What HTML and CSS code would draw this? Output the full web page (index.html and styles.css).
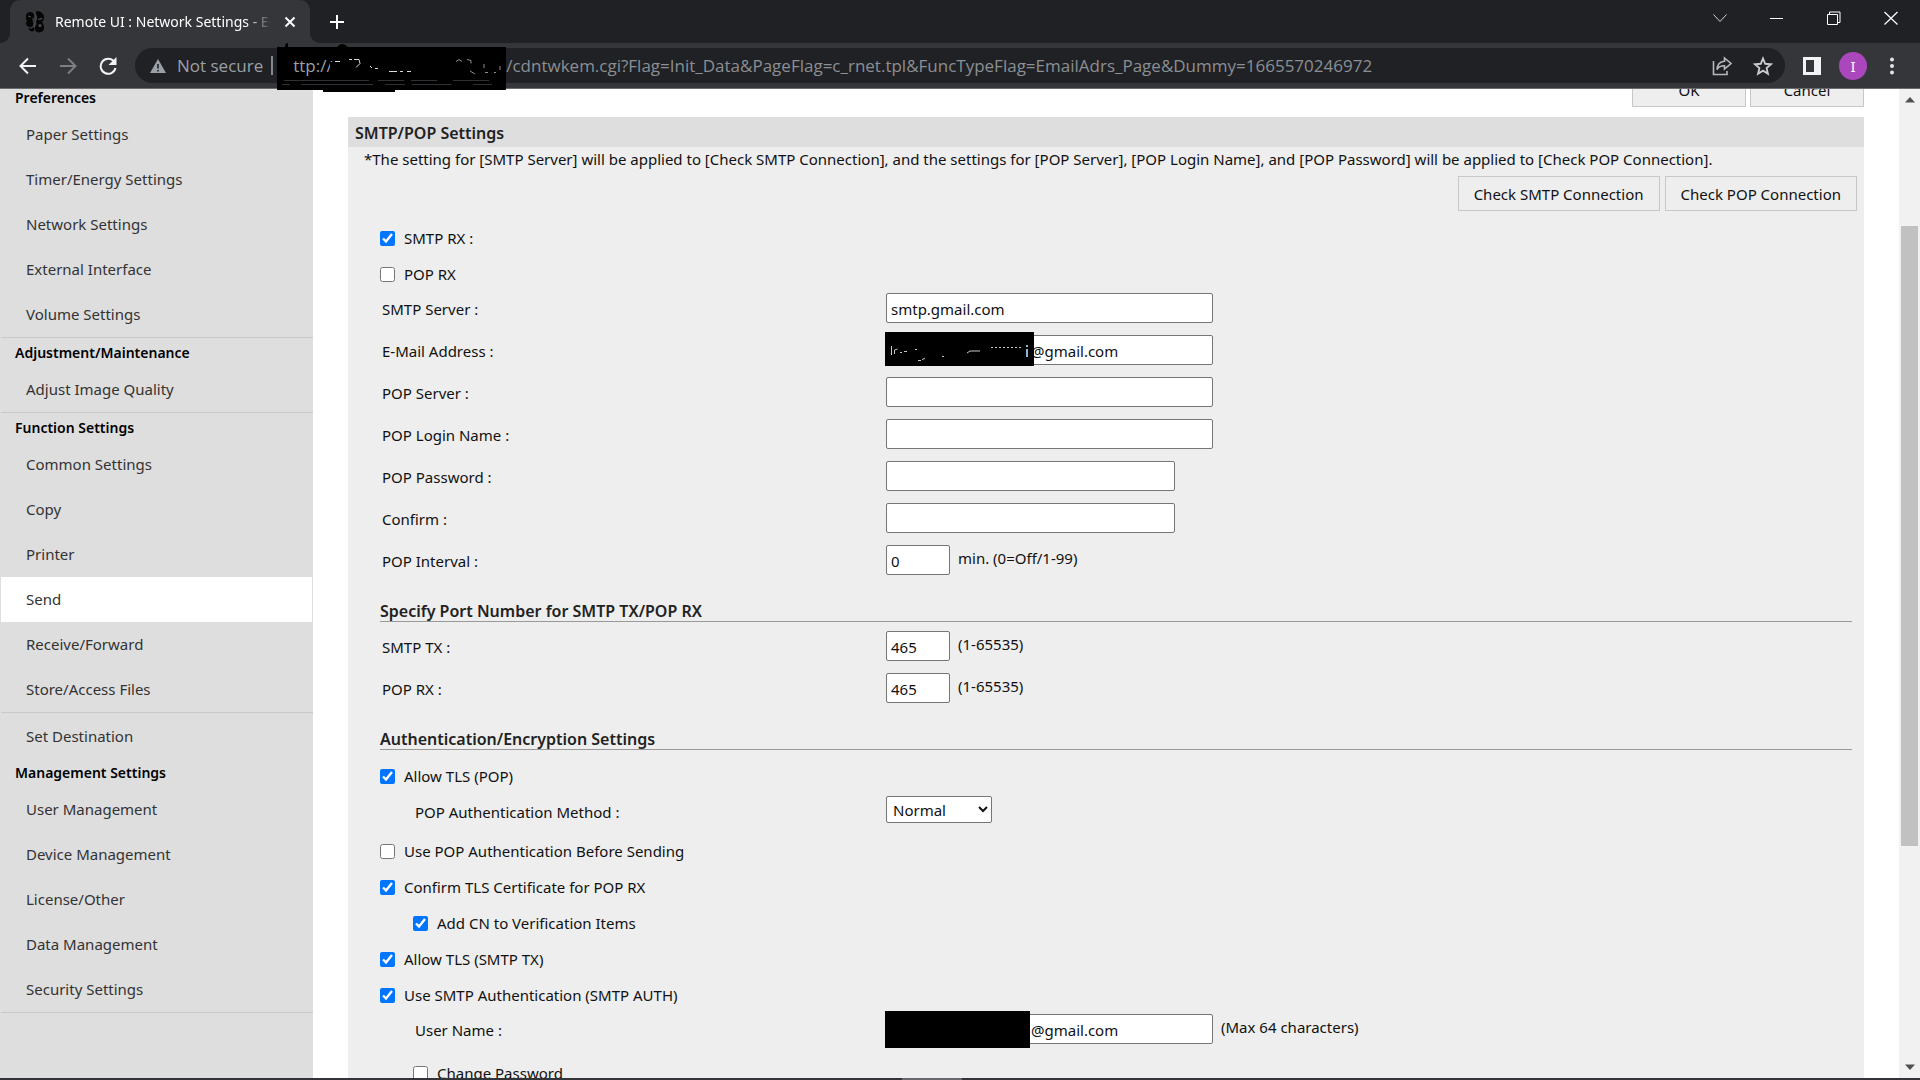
FILE: index.html
```html
<!DOCTYPE html>
<html lang="en">
<head>
<meta charset="utf-8">
<title>Remote UI : Network Settings - E-Mail</title>
<link rel="stylesheet" href="styles.css">
</head>
<body>
<header class="browser">
  <div class="tabstrip">
    <div class="tab">
      <svg class="favicon" width="20" height="22" viewBox="0 0 20 22"><path fill="#060606" d="M1 4C2 1 6 0 8 2c2 2 1 5-1 6l1 3c1 3-1 6-4 5C1 15 0 12 2 10L1 8zM10 1c4-2 9 1 9 5 0 3-1 4-2 5 2 3 3 6 1 9-2 2-7 2-8-1-1-2 0-4 2-6-2-3-1-5 0-7z"/><path fill="#060606" d="M3 17c2 1 4 1 6-1v4c-2 1-5 0-6-3z"/><path fill="none" stroke="#4a4b4f" stroke-width="1.2" d="M10 1c-1 3 3 4 1 8-1 3-3 4-1 7M3 5l3 1M13 8c2 1 3 0 4-1"/><circle cx="15" cy="14.500" r="1.600" fill="#4a4b4f"/></svg>
      <span class="tab-title">Remote UI : Network Settings - E-Mail</span>
      <button class="icon-btn" type="button" aria-label="Close tab"><svg width="12" height="12" viewBox="0 0 12 12"><path d="M1.500 1.500l9 9M10.500 1.500l-9 9" stroke="#fff" stroke-width="2"/></svg></button>
    </div>
    <button class="icon-btn new-tab" type="button" aria-label="New tab"><svg width="16" height="16" viewBox="0 0 16 16"><path d="M8 1v14M1 8h14" stroke="#fff" stroke-width="2"/></svg></button>
    <div class="window-controls">
      <button class="icon-btn" type="button" aria-label="Search tabs"><svg width="14" height="14" viewBox="0 0 14 14"><path d="M.5 3.500L7 10.500l6.500-7" fill="none" stroke="#d0d0d0"/></svg></button>
      <button class="icon-btn" type="button" aria-label="Minimize"><svg width="14" height="14" viewBox="0 0 14 14"><path d="M0 7.500h13" stroke="#fff"/></svg></button>
      <button class="icon-btn" type="button" aria-label="Restore"><svg width="14" height="14" viewBox="0 0 14 14"><path d="M.5 3.500h10v10H.5zM2.500 3V1h10.500v10.500h-2" fill="none" stroke="#fff"/></svg></button>
      <button class="icon-btn" type="button" aria-label="Close"><svg width="14" height="14" viewBox="0 0 14 14"><path d="M.5 1l13 12.500M13.500 1l-13 12.500" stroke="#fff" stroke-width="1.200"/></svg></button>
    </div>
  </div>
  <div class="toolbar">
    <div class="nav-buttons">
      <button class="icon-btn" type="button" aria-label="Back"><svg width="18" height="18" viewBox="0 0 18 18"><path d="M17 9H2M9 1.500L1.500 9 9 16.500" fill="none" stroke="#f1f3f4" stroke-width="2"/></svg></button>
      <button class="icon-btn" type="button" aria-label="Forward"><svg width="18" height="18" viewBox="0 0 18 18"><path d="M1 9h15M9 1.500L16.500 9 9 16.500" fill="none" stroke="#7d7e81" stroke-width="2"/></svg></button>
      <button class="icon-btn" type="button" aria-label="Reload"><svg width="18" height="18" viewBox="0 0 18 18"><path d="M15 4.500A7.500 7.500 0 1 0 16.500 11" fill="none" stroke="#f1f3f4" stroke-width="2"/><path d="M17.500 0v8h-8z" fill="#f1f3f4"/></svg></button>
    </div>
    <div class="omnibox">
      <svg class="warn" width="16" height="16" viewBox="0 0 16 16"><path fill="#9aa0a6" d="M8 1l8 14H0z"/><path stroke="#202124" stroke-width="1.600" d="M8 6v4.500M8 12v1.500"/></svg>
      <span class="secure">Not secure</span>
      <span class="divider"></span>
      <span class="redacted-host"><span>ttp://</span>
        <svg width="229" height="48" viewBox="0 0 229 48"><path fill="#000" d="M8 0q0-4 3-4v4zM60 0q5-6 11 0zM46 42h72v3H46zM52 8h14v6H52zM53 15h14v8H53z"/><path fill="none" stroke="#dcdcdc" d="M58 14.500h5M72 12.500h3M77 12.500h5l1 4-4 4M93 19l2 2M98 21.500h3M112 24.500h8M123 24.500h3M130 24.500h4"/><path fill="none" stroke="#8b8f94" d="M179 14.500l3-2 3 2M190 12.500l4 1v3M193 24l5 3M207 17v4M208 25.500h3M217 25.500h2M223 19v4"/><path fill="none" stroke="#303135" d="M7 33.500h85M101 33.500h26M134 33.500h26M176 33.500h36M5 37.500h8M24 37.500h72M108 37.500h20M135 37.500h40M196 37.500h19"/></svg>
      </span>
      <input class="url" type="text" aria-label="Address" value="/cdntwkem.cgi?Flag=Init_Data&amp;PageFlag=c_rnet.tpl&amp;FuncTypeFlag=EmailAdrs_Page&amp;Dummy=1665570246972">
      <button class="icon-btn" type="button" aria-label="Share"><svg width="20" height="20" viewBox="0 0 20 20"><path d="M1.500 5v13.500h13.500V15" fill="none" stroke="#b5b8bc" stroke-width="1.600"/><path d="M12.500 2l6.500 5.500-6.500 5.500v-3.200c-4 0-6 1.200-7.500 3.700.3-4.500 3-8 7.500-8.300z" fill="none" stroke="#b5b8bc" stroke-width="1.600"/></svg></button>
      <button class="icon-btn" type="button" aria-label="Bookmark"><svg width="20" height="20" viewBox="0 0 20 20"><path d="M10 2.500l2.200 5.300 5.800.5-4.400 3.800 1.300 5.600-4.900-3-4.900 3 1.300-5.600L2 8.300l5.800-.5z" fill="none" stroke="#c9cbce" stroke-width="1.900"/></svg></button>
    </div>
    <div class="toolbar-end">
      <button class="icon-btn" type="button" aria-label="Side panel"><svg width="18" height="18" viewBox="0 0 18 18"><path fill="#f1f3f4" fill-rule="evenodd" d="M0 0h18v18H0zM3 3v12h8V3z"/></svg></button>
      <button class="avatar" type="button">I</button>
      <button class="icon-btn" type="button" aria-label="Menu"><svg width="6" height="18" viewBox="0 0 6 18"><g fill="#e3e4e6"><circle cx="3" cy="2.500" r="2"/><circle cx="3" cy="9" r="2"/><circle cx="3" cy="15.500" r="2"/></g></svg></button>
    </div>
  </div>
</header>

<div class="page">
  <nav class="sidebar">
    <section class="menu-group first">
      <h2>Preferences</h2>
      <a href="#">Paper Settings</a>
      <a href="#">Timer/Energy Settings</a>
      <a href="#">Network Settings</a>
      <a href="#">External Interface</a>
      <a href="#">Volume Settings</a>
    </section>
    <section class="menu-group">
      <h2>Adjustment/Maintenance</h2>
      <a href="#">Adjust Image Quality</a>
    </section>
    <section class="menu-group">
      <h2>Function Settings</h2>
      <a href="#">Common Settings</a>
      <a href="#">Copy</a>
      <a href="#">Printer</a>
      <a href="#" class="current">Send</a>
      <a href="#">Receive/Forward</a>
      <a href="#">Store/Access Files</a>
    </section>
    <section class="menu-group">
      <a href="#" class="standalone">Set Destination</a>
      <h2>Management Settings</h2>
      <a href="#">User Management</a>
      <a href="#">Device Management</a>
      <a href="#">License/Other</a>
      <a href="#">Data Management</a>
      <a href="#">Security Settings</a>
    </section>
  </nav>

  <main class="content">
    <div class="actions">
      <button class="btn wide" type="button">OK</button>
      <button class="btn wide" type="button">Cancel</button>
    </div>
    <form class="panel">
      <h1>SMTP/POP Settings</h1>
      <p class="note">*The setting for [SMTP Server] will be applied to [Check SMTP Connection], and the settings for [POP Server], [POP Login Name], and [POP Password] will be applied to [Check POP Connection].</p>
      <div class="checks-bar">
        <button class="btn" type="button">Check SMTP Connection</button>
        <button class="btn" type="button">Check POP Connection</button>
      </div>
      <div class="fields">
        <label class="check"><input type="checkbox" checked>SMTP RX :</label>
        <label class="check"><input type="checkbox">POP RX</label>
        <div class="field"><label for="server">SMTP Server :</label><input id="server" type="text" class="long" value="smtp.gmail.com"></div>
        <div class="field"><label for="mail">E-Mail Address :</label><span class="masked"><input id="mail" type="text" class="long" value="@gmail.com"><svg class="mask" width="149" height="34" viewBox="0 0 149 34"><path fill="#000" d="M0 0h149v34H0z"/><path fill="none" stroke="#c8c8c8" d="M6.500 14v9M9.500 22v-4l3-1M15 20.500h2M19 19.500h3M30 17.500h2M33 28.500h3M37 27.500l3-1M57 24.500h2M82 21l3-2h10"/><path fill="none" stroke="#c8c8c8" stroke-dasharray="2 2" d="M106 15.500h30"/><path stroke="#8fb8d8" stroke-width="2" d="M142 13v2M142 17v8"/></svg></span></div>
        <div class="field"><label for="pop">POP Server :</label><input id="pop" type="text" class="long"></div>
        <div class="field"><label for="login">POP Login Name :</label><input id="login" type="text" class="long"></div>
        <div class="field"><label for="pass">POP Password :</label><input id="pass" type="password" class="medium"></div>
        <div class="field"><label for="confirm">Confirm :</label><input id="confirm" type="password" class="medium"></div>
        <div class="field"><label for="interval">POP Interval :</label><input id="interval" type="text" class="short" value="0"><span class="hint">min. (0=Off/1-99)</span></div>

        <h3>Specify Port Number for SMTP TX/POP RX</h3>
        <div class="field"><label for="tx">SMTP TX :</label><input id="tx" type="text" class="short" value="465"><span class="hint">(1-65535)</span></div>
        <div class="field"><label for="rx">POP RX :</label><input id="rx" type="text" class="short" value="465"><span class="hint">(1-65535)</span></div>

        <h3>Authentication/Encryption Settings</h3>
        <label class="check"><input type="checkbox" checked>Allow TLS (POP)</label>
        <div class="field nested choice"><label for="method">POP Authentication Method :</label><select id="method"><option>Normal</option></select></div>
        <label class="check"><input type="checkbox">Use POP Authentication Before Sending</label>
        <label class="check"><input type="checkbox" checked>Confirm TLS Certificate for POP RX</label>
        <label class="check nested"><input type="checkbox" checked>Add CN to Verification Items</label>
        <label class="check"><input type="checkbox" checked>Allow TLS (SMTP TX)</label>
        <label class="check"><input type="checkbox" checked>Use SMTP Authentication (SMTP AUTH)</label>
        <div class="field nested"><label for="user">User Name :</label><span class="masked"><input id="user" type="text" class="long" value="@gmail.com"><svg class="mask" width="145" height="37" viewBox="0 0 145 37"><path fill="#000" d="M0 0h145v37H0z"/></svg></span><span class="hint">(Max 64 characters)</span></div>
        <label class="check nested"><input type="checkbox">Change Password</label>
      </div>
    </form>
  </main>

  <div class="scrollbar">
    <svg width="10" height="6" viewBox="0 0 10 6"><path fill="#505050" d="M0 5.500h10L5 0z"/></svg>
    <div class="track"><div class="thumb"></div></div>
    <svg width="10" height="6" viewBox="0 0 10 6"><path fill="#505050" d="M0 .5h10L5 6z"/></svg>
  </div>
</div>
<div class="taskbar"><span></span></div>
</body>
</html>
```
FILE: styles.css
```css
* { box-sizing: border-box; }
body {
  margin: 0;
  height: 100vh;
  overflow: hidden;
  display: flex;
  flex-direction: column;
  font: 15px/20px "Noto Sans", "Open Sans", sans-serif;
  color: #111;
}
button, input, select { font: inherit; color: inherit; }
svg { display: block; flex: none; }

/* browser chrome */
.browser { flex: none; position: relative; z-index: 1; background: #35363a; border-bottom: 1px solid #6a6b6e; }
.icon-btn { display: flex; align-items: center; justify-content: center; padding: 0; border: 0; background: none; flex: none; }
.tabstrip { display: flex; align-items: center; height: 43px; padding-left: 10px; background: #202124; }
.tab {
  position: relative;
  display: flex; align-items: center;
  width: 300px; height: 43px;
  padding: 0 14px 0 15px;
  border-radius: 10px 10px 0 0;
  background: #35363a;
}
.tab::before, .tab::after { content: ""; position: absolute; bottom: 0; width: 10px; height: 10px; }
.tab::before { left: -10px; background: radial-gradient(circle at 0 0, #202124 10px, #35363a 10px); }
.tab::after { right: -10px; background: radial-gradient(circle at 100% 0, #202124 10px, #35363a 10px); }
.tab-title {
  flex: 1; margin: 0 12px 0 10px;
  font-size: 14px; color: #fff; white-space: nowrap; overflow: hidden;
  -webkit-mask-image: linear-gradient(to right, #000 88%, transparent);
  mask-image: linear-gradient(to right, #000 88%, transparent);
}
.new-tab { margin-left: 19px; }
.window-controls { display: flex; margin-left: auto; align-self: flex-start; height: 36px; padding-right: 1px; }
.window-controls .icon-btn { width: 57px; }
.toolbar { display: flex; align-items: center; height: 45px; }
.nav-buttons { display: flex; gap: 22px; padding: 0 18px 0 19px; }
.omnibox {
  flex: 1; min-width: 0;
  display: flex; align-items: center;
  height: 35px; padding: 0 12px 0 15px;
  border-radius: 18px;
  background: #202124; color: #9aa0a6;
  font: 17px/24px "Open Sans", "Noto Sans", sans-serif;
}
.secure { margin-left: 11px; white-space: nowrap; }
.divider { width: 2px; height: 19px; margin: 0 4px 0 8px; background: #85888c; }
.redacted-host {
  position: relative; flex: none; align-self: flex-start;
  width: 229px; height: 43px; margin-top: -1px; padding: 7px 0 0 16px;
  background: #000;
}
.redacted-host svg { position: absolute; left: 0; top: 0; overflow: visible; }
.url { flex: 1; min-width: 0; padding: 0; border: 0; background: none; color: #8b8f94; }
.omnibox .icon-btn + .icon-btn { margin-left: 21px; }
.toolbar-end { display: flex; align-items: center; gap: 18px; padding: 0 25px 0 18px; }
.toolbar-end .icon-btn:last-child { margin-left: 4px; }
.avatar { width: 28px; height: 28px; padding: 0; border: 0; border-radius: 50%; background: #ab47bc; color: #fff; }

/* page */
.page { flex: 1; min-height: 0; display: flex; background: #fff; overflow: hidden; }
.sidebar { flex: none; width: 313px; padding-left: 1px; background: #dedede; }
.menu-group { border-bottom: 1px solid #c8c8c8; }
.menu-group h2 { margin: 0; padding-left: 14px; font-size: 14px; font-weight: 600; line-height: 29px; color: #000; }
.menu-group.first h2 { line-height: 18px; padding-bottom: 5px; }
.menu-group a { display: block; margin-right: 1px; padding-left: 25px; line-height: 45px; color: #333; text-decoration: none; }
.menu-group a.current { background: #fff; }
.menu-group a.standalone { padding-top: 1px; line-height: 44px; }
.content { flex: 1; min-width: 0; padding: 0 35px; }
.actions { display: flex; justify-content: flex-end; align-items: flex-end; gap: 4px; height: 18px; overflow: hidden; }
.btn { flex: none; height: 35px; padding: 0 15px; border: 1px solid #c8c8c8; background: #eee; color: #111; white-space: nowrap; }
.btn.wide { width: 114px; }
.panel { margin-top: 10px; min-height: 100%; background: #eee; }
.panel h1 { margin: 0; padding: 3px 0 0 7px; font-size: 16px; line-height: 27px; font-weight: 600; color: #222; background: #dedede; }
.note { margin: 0; padding: 2px 0 7px 16px; white-space: nowrap; }
.checks-bar { display: flex; justify-content: flex-end; gap: 5px; padding-right: 7px; }
.fields { padding: 10px 12px 0 32px; }
.fields h3 { margin: 12px 0 9px; padding-top: 3px; font-size: 16px; line-height: 19px; font-weight: 600; color: #222; border-bottom: 1px solid #999; }
.check { display: flex; align-items: center; height: 36px; padding-bottom: 2px; }
.check input { width: 15px; height: 15px; margin: 0 9px 0 0; accent-color: #0075ff; }
.check.nested { padding-left: 33px; }
.field { display: flex; align-items: flex-start; height: 42px; line-height: 32px; }
.field > label { width: 506px; padding-left: 2px; flex: none; }
.field.nested > label { padding-left: 35px; }
.field.choice { height: 39px; padding-top: 1px; }
.field input { height: 30px; padding: 2px 4px 0; border: 1px solid #767676; border-radius: 2px; background: #fff; }
.field .long { width: 327px; }
.field .medium { width: 289px; }
.field .short { width: 64px; }
.field select { width: 106px; height: 27px; padding: 0 0 0 2px; border: 1px solid #767676; border-radius: 2px; background: #fff; }
.hint { margin-left: 8px; line-height: 26px; }
.masked { position: relative; display: flex; }
.masked input { padding-left: 144px; }
.mask { position: absolute; left: -1px; top: -3px; }

.scrollbar { flex: none; display: flex; flex-direction: column; align-items: center; width: 21px; padding: 8px 0; background: #f1f1f1; }
.track { flex: 1; align-self: stretch; padding: 0 2px; display: flex; flex-direction: column; }
.track::before { content: ""; flex: 123; }
.track::after { content: ""; flex: 218; }
.thumb { flex: 620; background: #c1c1c1; }
.taskbar { flex: none; height: 2px; background: #333438; padding-left: 47%; }
.taskbar span { display: block; width: 60px; height: 2px; background: #68696c; }
```
